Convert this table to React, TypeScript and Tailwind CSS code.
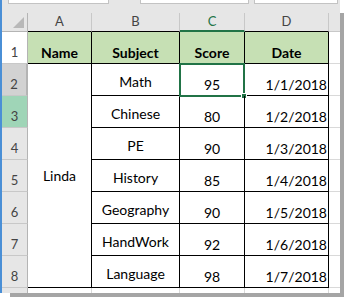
import React from "react";

type Row = { subject: string; score: number; date: string };

const rows: Row[] = [
  { subject: "Math", score: 95, date: "1/1/2018" },
  { subject: "Chinese", score: 80, date: "1/2/2018" },
  { subject: "PE", score: 90, date: "1/3/2018" },
  { subject: "History", score: 85, date: "1/4/2018" },
  { subject: "Geography", score: 90, date: "1/5/2018" },
  { subject: "HandWork", score: 92, date: "1/6/2018" },
  { subject: "Language", score: 98, date: "1/7/2018" },
];

const colHead = "flex items-center justify-center border-r border-[#c8c8c8] bg-[#e6e6e6] text-[13px] text-[#444]";
const rowHead = "flex items-end justify-center border-r border-b border-r-[#b4b4b4] border-b-[#c8c8c8] pb-[2px] text-[13px] leading-[17px] text-[#444]";
const cell = "border-r border-b border-black text-[14px] leading-[17px] text-black";

export default function App() {
  return (
    <div className="grid h-[297px] w-[344px] grid-cols-[340px_4px] grid-rows-[293px_4px] bg-white font-[Lato,sans-serif]">
      <div className="grid grid-cols-[2px_26px_64px_88px_65px_84px_11px] grid-rows-[13px_19px_32px_repeat(7,32px)_5px]">
        {/* window edge */}
        <div className="row-span-11 bg-[#4a8fd6]" />

        {/* formula bar bottom */}
        <div className="col-span-6 flex items-start bg-[#e6e6e6]">
          <div className="ml-[6px] h-[4px] w-[101px] border border-t-0 border-[#c3c3c3] bg-white" />
          <div className="ml-[31px] h-[4px] w-[109px] border border-t-0 border-[#c3c3c3] bg-white" />
          <div className="ml-[5px] h-[4px] w-[84px] border border-t-0 border-[#c3c3c3] bg-white" />
        </div>

        {/* column headers */}
        <div className="flex items-end justify-end border-r border-b border-r-[#b4b4b4] border-b-[#b4b4b4] bg-[#e6e6e6] p-[3px]">
          <div className="h-0 w-0 border-b-[11px] border-l-[11px] border-b-[#b8b8b8] border-l-transparent" />
        </div>
        <div className={`${colHead} border-b border-b-black`}>A</div>
        <div className={`${colHead} border-b border-b-black`}>B</div>
        <div className={`${colHead} border-b-2 border-b-[#217346] bg-[#d2d2d2] text-[#217346]`}>C</div>
        <div className={`${colHead} border-b border-b-black`}>D</div>
        <div className="border-b border-[#c8c8c8] bg-[#e6e6e6]" />

        {/* row 1 */}
        <div className={rowHead}>1</div>
        {["Name", "Subject", "Score", "Date"].map((h) => (
          <div key={h} className={`${cell} flex items-end justify-center bg-[#c6e0b4] pb-[2px] font-bold`}>
            {h}
          </div>
        ))}
        <div className="border-b border-[#d9d9d9]" />

        {/* rows 2-8 */}
        {rows.map((r, i) => (
          <React.Fragment key={r.subject}>
            <div
              className={
                i === 0
                  ? `${rowHead} border-r-2 border-r-[#217346] bg-[#d2d2d2]`
                  : i === 1
                    ? `${rowHead} bg-[#9fd5b7]`
                    : `${rowHead} bg-[#e6e6e6]`
              }
            >
              {i + 2}
            </div>
            {i === 0 && <div className={`${cell} row-span-7 flex items-center justify-center`}>Linda</div>}
            <div className={`${cell} flex items-center justify-center pt-[3px]`}>{r.subject}</div>
            <div className={`${cell} relative flex items-end justify-center pb-[2px]`}>
              {r.score}
              {i === 0 && (
                <div className="absolute -top-px -left-px h-[34px] w-[66px] border-2 border-[#217346]">
                  <div className="absolute -right-[4px] -bottom-[4px] h-[6px] w-[6px] border border-white bg-[#217346]" />
                </div>
              )}
            </div>
            <div className={`${cell} flex items-end justify-end pr-[1px] pb-[2px]`}>{r.date}</div>
            <div className="border-b border-[#d9d9d9]" />
          </React.Fragment>
        ))}

        {/* partial row 9 */}
        <div className="border-r border-[#b4b4b4] bg-[#e6e6e6]" />
        <div className="border-r border-[#d9d9d9]" />
        <div className="border-r border-[#d9d9d9]" />
        <div className="border-r border-[#d9d9d9]" />
        <div className="border-r border-[#d9d9d9]" />
        <div />
      </div>

      {/* drop shadow */}
      <div className="flex flex-col">
        <div className="h-[13px]" />
        <div className="flex-1 bg-[#a5a5a5]" />
      </div>
      <div className="flex">
        <div className="w-[10px]" />
        <div className="flex-1 bg-[#a5a5a5]" />
      </div>
      <div className="bg-[#a5a5a5]" />
    </div>
  );
}
